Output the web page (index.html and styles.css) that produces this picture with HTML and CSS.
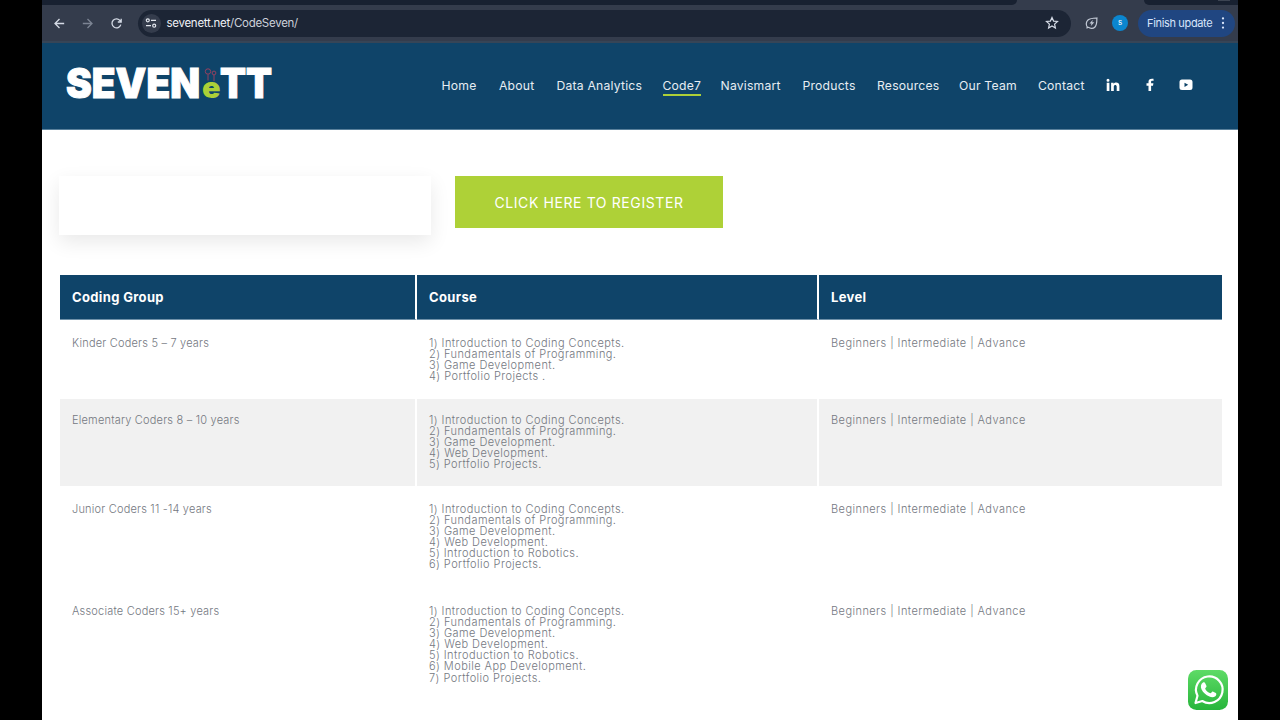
FILE: index.html
```html
<!DOCTYPE html>
<html lang="en">
<head>
  <meta charset="UTF-8">
  <meta name="viewport" content="width=device-width, initial-scale=1.0">
  <title>Code7 - Sevenett</title>
  <link rel="stylesheet" href="styles.css">
</head>
<body>
  <div class="window">
    <div class="tabstrip"><div class="tab-left"></div><div class="tab-right"><span class="tab-button"></span></div></div>
    <div class="toolbar">
      <svg class="tool-icon back" viewBox="0 0 16 16"><path d="M13 8H3.5M8 3.2L3.2 8L8 12.8"/></svg>
      <svg class="tool-icon forward" viewBox="0 0 16 16"><path d="M3 8h9.5M8 3.2L12.8 8L8 12.8"/></svg>
      <svg class="tool-icon reload" viewBox="0 0 16 16"><path d="M12.6 9.2A4.8 4.8 0 1 1 12 5.2L13 6.2M13 2.8v3.6H9.4"/></svg>
      <div class="address-bar">
        <span class="site-info">
          <svg viewBox="0 0 12 12"><circle cx="2.8" cy="3.3" r="1.5"/><path d="M6 3.3h5M1 8.7h5"/><circle cx="9.2" cy="8.7" r="1.5"/></svg>
        </span>
        <span class="url">sevenett.net<span class="url-path">/CodeSeven/</span></span>
        <svg class="star" viewBox="0 0 14 14"><path d="M7 1.5l1.6 3.6 3.9.4-2.9 2.6.8 3.9L7 10l-3.4 2 .8-3.9L1.5 5.5l3.9-.4z"/></svg>
      </div>
      <svg class="energy" viewBox="0 0 14 14"><path d="M2.3 11.2C.7 9 1 5.7 3 4c2-1.700 5-1.800 8.900-2 0 4 .1 7-1.900 9-1.800 1.800-4.900 1.800-6.600.2M1.500 12.300l1.900-1.300"/><path class="bolt" d="M7.800 3.700L4.500 7.600h2L5.700 10.300 9.300 6.300H7.200z"/></svg>
      <span class="profile">s</span>
      <button class="update-btn">Finish update
        <svg viewBox="0 0 4 12"><circle cx="2" cy="1.4" r="1.15"/><circle cx="2" cy="6" r="1.15"/><circle cx="2" cy="10.6" r="1.15"/></svg>
      </button>
    </div>

    <header class="site-header">
      <svg class="logo" viewBox="0 0 208 40">
        <g class="logo-text">
          <text x="0" y="34" textLength="134" lengthAdjust="spacingAndGlyphs">SEVEN</text>
          <text x="154" y="34" textLength="52" lengthAdjust="spacingAndGlyphs">TT</text>
        </g>
        <g class="logo-circuit"><circle cx="142" cy="7.5" r="2.7"/><circle cx="148" cy="9" r="1.9"/><path d="M142 10.500v6M148 11v6"/></g>
        <text class="logo-e" x="136" y="33.5" textLength="18.5" lengthAdjust="spacingAndGlyphs">e</text>
      </svg>
      <nav class="menu">
        <a>Home</a>
        <a>About</a>
        <a>Data Analytics</a>
        <a class="active">Code7</a>
        <a>Navismart</a>
        <a>Products</a>
        <a>Resources</a>
        <a>Our Team</a>
        <a>Contact</a>
      </nav>
      <div class="social">
        <svg viewBox="0 0 14 14"><path d="M.7 4.800h2.700v8.200H.7zM2 .8a1.500 1.500 0 1 1 0 3 1.500 1.500 0 0 1 0-3zM5.100 4.800h2.500v1.100c1.300-2 5.800-2 5.800 2V13h-2.700V8.600c0-2.200-2.900-2-2.900 0V13H5.100z"/></svg>
        <svg viewBox="0 0 14 14"><path d="M5.500 13V7.700h-2V5.300h2V3.800C5.500 1.400 7.100.3 10.500.8v2.100C8.800 2.700 8.100 2.800 8.100 4v1.300h2.300L10 7.700H8.100V13z"/></svg>
        <svg viewBox="0 0 14 14"><path fill-rule="evenodd" d="M3 1.500h8Q13.500 1.500 13.500 4v5.500Q13.500 12 11 12H3Q.5 12 .5 9.500V4Q.5 1.500 3 1.500zM5.500 4.700v4.200l3.700-2.100z"/></svg>
      </div>
    </header>

    <main>
      <div class="register-row">
        <div class="blank-card"></div>
        <button class="register-btn">CLICK HERE TO REGISTER</button>
      </div>

      <table class="courses">
        <thead>
          <tr><th class="col-group">Coding Group</th><th class="col-course">Course</th><th>Level</th></tr>
        </thead>
        <tbody>
          <tr class="kinder">
            <td>Kinder Coders 5 – 7 years</td>
            <td>1) Introduction to Coding Concepts.<br>2) Fundamentals of Programming.<br>3) Game Development.<br>4) Portfolio Projects .</td>
            <td>Beginners | Intermediate | Advance</td>
          </tr>
          <tr class="elementary">
            <td>Elementary Coders 8 – 10 years</td>
            <td>1) Introduction to Coding Concepts.<br>2) Fundamentals of Programming.<br>3) Game Development.<br>4) Web Development.<br>5) Portfolio Projects.</td>
            <td>Beginners | Intermediate | Advance</td>
          </tr>
          <tr class="junior">
            <td>Junior Coders 11 -14 years</td>
            <td>1) Introduction to Coding Concepts.<br>2) Fundamentals of Programming.<br>3) Game Development.<br>4) Web Development.<br>5) Introduction to Robotics.<br>6) Portfolio Projects.</td>
            <td>Beginners | Intermediate | Advance</td>
          </tr>
          <tr class="associate">
            <td>Associate Coders 15+ years</td>
            <td>1) Introduction to Coding Concepts.<br>2) Fundamentals of Programming.<br>3) Game Development.<br>4) Web Development.<br>5) Introduction to Robotics.<br>6) Mobile App Development.<br>7) Portfolio Projects.</td>
            <td>Beginners | Intermediate | Advance</td>
          </tr>
        </tbody>
      </table>
    </main>

    <!-- floating chat button -->
    <svg class="whatsapp" viewBox="0 0 40 40">
      <defs><linearGradient id="wa" x1="0" y1="0" x2="0" y2="1"><stop offset="0" stop-color="#5edb66"/><stop offset="1" stop-color="#27b53b"/></linearGradient></defs>
      <rect width="40" height="40" rx="8.5" fill="url(#wa)"/>
      <path d="M7.5 33l2-7.2A13.3 13.3 0 1 1 14.3 31z" fill="none" stroke="#fff" stroke-width="2.2" stroke-linejoin="round"/>
      <path d="M15 12.500c1-.6 1.900-.2 2.200.7l1.300 2.900c.3.900-1.300 2-1.300 2.600.8 2 2.800 3.800 5.200 4.600.7 0 1.600-2 2.400-1.800l3 1.500c1 .6.500 2.400-.4 3.200-1.700 1.400-3.800 1.300-6 .4-3.600-1.500-6.300-4.300-7.800-7.200-1.300-2.700-.8-5.500 1.400-6.900z" fill="#fff"/>
    </svg>
  </div>
</body>
</html>
```
FILE: styles.css
```css
* {
  box-sizing: border-box;
}
body {
  margin: 0;
  background-color: #000;
  font-family: Inter, "Open Sans", sans-serif;
  overflow: hidden;
}
.window {
  position: relative;
  width: 1196px;
  height: 720px;
  margin: 0 auto;
  background-color: #fff;
  overflow: hidden;
}

/* browser bar */
.tabstrip {
  display: flex;
  justify-content: space-between;
  height: 5px;
  background-color: #343c4c;
}
.tab-left {
  width: 975px;
  background-color: #182131;
  border-radius: 0 0 5px 0;
}
.tab-right {
  width: 94px;
  background-color: #182131;
  border-radius: 0 0 0 5px;
}
.tab-button {
  display: block;
  width: 12px;
  height: 1px;
  margin-left: 74px;
  background-color: #3c4452;
}
.toolbar {
  display: flex;
  align-items: center;
  height: 38px;
  padding: 1px 3px 1px 10px;
  background-color: #343c4c;
  border-bottom: 2px solid #364557;
}
.tool-icon {
  width: 15px;
  height: 15px;
  margin-right: 13.5px;
  fill: none;
  stroke: #d5dbe6;
  stroke-width: 1.4;
}
.forward {
  stroke: #7c8493;
}
.reload {
  margin-right: 14px;
}
.address-bar {
  display: flex;
  align-items: center;
  width: 934px;
  height: 27px;
  padding: 0 12px 0 4px;
  border-radius: 14px;
  background-color: #1c2535;
}
.site-info {
  display: flex;
  align-items: center;
  justify-content: center;
  width: 19px;
  height: 19px;
  margin-right: 5.5px;
  border-radius: 50%;
  background-color: #343c4c;
}
.site-info svg {
  width: 12px;
  fill: none;
  stroke: #e3e7ee;
  stroke-width: 1.2;
}
.url {
  flex: 1;
  color: #f0f2f6;
  font-size: 11.5px;
  letter-spacing: -0.27px;
}
.url-path {
  color: #ccd1da;
}
.star {
  width: 14px;
  fill: none;
  stroke: #d5dbe6;
  stroke-width: 1.2;
}
.energy {
  width: 14px;
  margin-left: 14px;
  fill: none;
  stroke: #c3cad6;
  stroke-width: 1.2;
}
.bolt {
  fill: #c3cad6;
  stroke: none;
}
.profile {
  width: 16px;
  height: 16px;
  margin: 0 10px 0 13px;
  border-radius: 50%;
  background-color: #0b86cf;
  color: #fff;
  font-size: 8px;
  line-height: 15px;
  text-align: center;
}
.update-btn {
  display: flex;
  align-items: center;
  justify-content: space-between;
  width: 97px;
  height: 27px;
  padding: 0 10px 0 9px;
  border: none;
  border-radius: 14px;
  background-color: #204681;
  color: #d8e5fb;
  font-family: inherit;
  font-size: 11px;
  letter-spacing: -0.35px;
  white-space: nowrap;
}
.update-btn svg {
  width: 4px;
  height: 12px;
  fill: #d8e5fb;
}

/* site header */
.site-header {
  display: flex;
  height: 87px;
  padding-left: 24px;
  background-color: #0f4469;
  border-bottom: 1px solid #59809b;
}
.logo {
  width: 208px;
  height: 40px;
  margin-top: 21px;
  overflow: visible;
}
.logo-text {
  fill: #fff;
  stroke: #fff;
  stroke-width: 1;
  font: 900 40.5px Inter, sans-serif;
}
.logo-circuit {
  fill: none;
  stroke: #96405f;
  stroke-width: 1;
}
.logo-e {
  fill: #acd038;
  font: 900 29px Inter, sans-serif;
}
.menu {
  display: grid;
  grid-template-columns: 57.5px 57.5px 106px 58px 82px 74.5px 82px 79px 68px;
  align-items: start;
  justify-items: start;
  margin-left: 167.5px;
  padding-top: 35px;
}
.menu a {
  padding-bottom: 1px;
  border-bottom: 2px solid transparent;
  color: #e6edf3;
  font-size: 12.2px;
  line-height: 15px;
  letter-spacing: 0.2px;
  white-space: nowrap;
}
.menu .active {
  border-color: #acd038;
}
.social {
  display: flex;
  gap: 22.5px;
  padding-top: 34.5px;
}
.social svg {
  width: 14px;
  height: 14px;
  fill: #fff;
}

/* page content */
main {
  padding: 46px 16px 0 17px;
}
.register-row {
  display: flex;
  align-items: flex-start;
  gap: 24px;
  height: 99px;
}
.blank-card {
  width: 372px;
  height: 59px;
  background-color: #fff;
  box-shadow: 0 7px 20px rgba(0, 0, 0, 0.09);
}
.register-btn {
  width: 268px;
  height: 52px;
  padding: 0;
  border: none;
  background-color: #aed137;
  color: #fff;
  font-family: inherit;
  font-size: 14px;
  letter-spacing: 0.6px;
}
.courses {
  width: 1162px;
  margin-left: 1px;
  border-collapse: separate;
  border-spacing: 0;
  table-layout: fixed;
}
.courses th {
  height: 45px;
  padding: 0 12px;
  background-color: #0f4469;
  border-bottom: 1px solid #6f91a9;
  color: #fff;
  font-size: 13px;
  font-weight: 700;
  letter-spacing: 0.35px;
  text-align: left;
}
.courses .col-group {
  width: 357px;
}
.courses .col-course {
  width: 402px;
}
.courses th:not(:last-child),
.courses td:not(:last-child) {
  border-right: 2px solid #fff;
}
.courses td {
  padding: 18px 12px 0;
  color: #74787f;
  font-size: 11px;
  font-weight: 300;
  line-height: 11.1px;
  letter-spacing: 0.2px;
  vertical-align: top;
}
.courses td + td {
  letter-spacing: 0.44px;
}
.kinder {
  height: 79px;
}
.elementary {
  height: 87px;
  background-color: #f1f1f1;
}
.courses .elementary td {
  padding-top: 16px;
}
.junior {
  height: 102px;
}
.whatsapp {
  position: absolute;
  right: 10px;
  bottom: 10px;
  width: 40px;
  height: 40px;
}
```
